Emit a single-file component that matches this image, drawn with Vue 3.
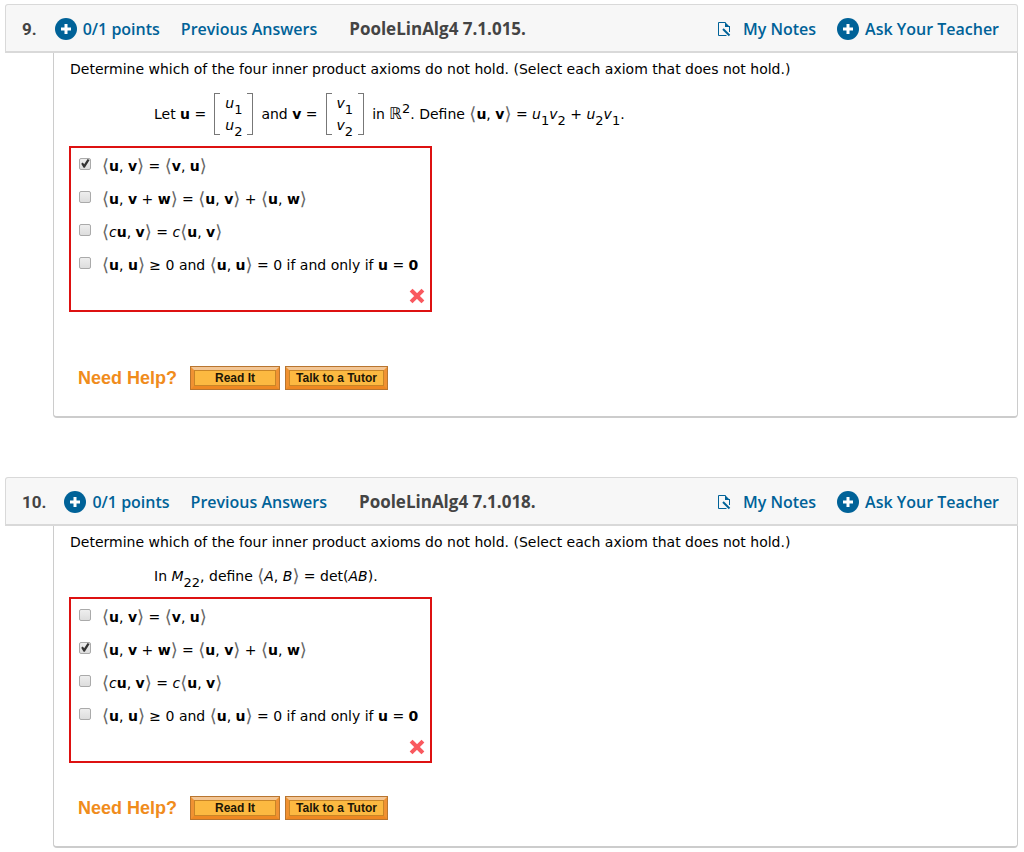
<script setup>
import { ref } from 'vue';

// each axiom is a list of parts: b = bold vector, i = italic, a = angle bracket, t = plain text
const axioms = [
    [['a', '⟨'], ['b', 'u'], ['t', ', '], ['b', 'v'], ['a', '⟩'], ['t', ' = '], ['a', '⟨'], ['b', 'v'], ['t', ', '], ['b', 'u'], ['a', '⟩']],
    [['a', '⟨'], ['b', 'u'], ['t', ', '], ['b', 'v'], ['t', ' + '], ['b', 'w'], ['a', '⟩'], ['t', ' = '], ['a', '⟨'], ['b', 'u'], ['t', ', '], ['b', 'v'], ['a', '⟩'], ['t', ' + '], ['a', '⟨'], ['b', 'u'], ['t', ', '], ['b', 'w'], ['a', '⟩']],
    [['a', '⟨'], ['i', 'c'], ['b', 'u'], ['t', ', '], ['b', 'v'], ['a', '⟩'], ['t', ' = '], ['i', 'c'], ['a', '⟨'], ['b', 'u'], ['t', ', '], ['b', 'v'], ['a', '⟩']],
    [['a', '⟨'], ['b', 'u'], ['t', ', '], ['b', 'u'], ['a', '⟩'], ['t', ' ≥ 0 and '], ['a', '⟨'], ['b', 'u'], ['t', ', '], ['b', 'u'], ['a', '⟩'], ['t', ' = 0 if and only if '], ['b', 'u'], ['t', ' = '], ['b', '0']],
];

const questions = ref([
    { number: 9, source: 'PooleLinAlg4 7.1.015.', checked: [true, false, false, false] },
    { number: 10, source: 'PooleLinAlg4 7.1.018.', checked: [false, true, false, false] },
]);
</script>

<template>
    <main class="page">
        <section class="question" v-for="question in questions" :key="question.number">
            <header class="question__header">
                <span class="question__number">{{ question.number }}.</span>
                <a class="link link--points" href="#">
                    <svg class="plus" viewBox="0 0 22 22"><circle cx="11" cy="11" r="11" /><path d="M11 6v10M6 11h10" /></svg>
                    0/1 points
                </a>
                <a class="link link--previous" href="#">Previous Answers</a>
                <h2 class="question__source">{{ question.source }}</h2>
                <a class="link link--notes" href="#">
                    <svg class="note" viewBox="0 0 14 16">
                        <path d="M12.500 11V5M8.500 1.500H1.500v13H9.500" />
                        <path class="note__fold" d="M8 1l5 5H8z" />
                        <path class="note__pen" d="M6 8l6.500 6.500" />
                    </svg>
                    My Notes
                </a>
                <a class="link" href="#">
                    <svg class="plus" viewBox="0 0 22 22"><circle cx="11" cy="11" r="11" /><path d="M11 6v10M6 11h10" /></svg>
                    Ask Your Teacher
                </a>
            </header>

            <div class="question__body">
                <p class="prompt">Determine which of the four inner product axioms do not hold. (Select each axiom that does not hold.)</p>

                <div class="given given--matrix" v-if="question.number === 9">
                    <span>Let <b>u</b> =</span>
                    <span class="matrix">
                        <span><i>u</i><sub>1</sub></span>
                        <span><i>u</i><sub>2</sub></span>
                    </span>
                    <span>and <b>v</b> =</span>
                    <span class="matrix">
                        <span><i>v</i><sub>1</sub></span>
                        <span><i>v</i><sub>2</sub></span>
                    </span>
                    <span>in <span class="reals">ℝ</span><sup>2</sup>. Define <span class="angle">⟨</span><b>u</b>, <b>v</b><span class="angle">⟩</span> = <i>u</i><sub>1</sub><i>v</i><sub>2</sub> + <i>u</i><sub>2</sub><i>v</i><sub>1</sub>.</span>
                </div>
                <div class="given" v-else>
                    <span>In <i>M</i><sub>22</sub>, define <span class="angle">⟨</span><i>A</i>, <i>B</i><span class="angle">⟩</span> = det(<i>AB</i>).</span>
                </div>

                <div class="answers">
                    <label class="answer" v-for="(axiom, index) in axioms" :key="index">
                        <input class="answer__box" type="checkbox" v-model="question.checked[index]" />
                        <span class="answer__text"><span v-for="(part, n) in axiom" :key="n" :class="'part-' + part[0]">{{ part[1] }}</span></span>
                    </label>
                    <div class="answers__mark">
                        <svg class="cross" viewBox="0 0 16 16"><path d="M3.500 3.500l9 9M12.500 3.500l-9 9" /></svg>
                    </div>
                </div>

                <div class="help" :class="{ 'help--spaced': question.number === 9 }">
                    <span class="help__title">Need Help?</span>
                    <button class="help__button help__button--read" type="button">Read It</button>
                    <button class="help__button" type="button">Talk to a Tutor</button>
                </div>
            </div>
        </section>
    </main>
</template>

<style>
    body{
        margin: 0;
        background: #fff;
    }
</style>

<style scoped>
    .page{
        display: flex;
        flex-direction: column;
        gap: 59px;
        padding: 4px 6px 4px 5px;
        font-family: Verdana, "DejaVu Sans", sans-serif;
        font-size: 14px;
        color: #000;
    }

    .question__header{
        display: flex;
        align-items: center;
        box-sizing: border-box;
        height: 49px;
        padding: 1px 18px 0 16px;
        border: 1px solid #d9d9d9;
        border-bottom-width: 2px;
        border-radius: 3px 3px 0 0;
        background: #f7f7f7;
        font-family: "Open Sans", "Noto Sans", sans-serif;
        font-size: 16px;
    }

    .question__number{
        margin-right: 18px;
        color: #444;
        font-family: Roboto, sans-serif;
        font-size: 17px;
        font-weight: 700;
    }

    .link{
        display: flex;
        align-items: center;
        gap: 6px;
        color: #006298;
        font-weight: 600;
        text-decoration: none;
        white-space: nowrap;
    }

    .link--points{
        margin-right: 21px;
    }

    .link--previous{
        margin-right: 32px;
    }

    .link--notes{
        gap: 12px;
        margin-left: auto;
        margin-right: 21px;
    }

    .plus{
        width: 22px;
        height: 22px;
        fill: #006298;
    }

    .plus path{
        stroke: #fff;
        stroke-width: 3;
    }

    .note{
        width: 14px;
        height: 16px;
        fill: none;
        stroke: #006298;
        stroke-width: 1;
    }

    .note .note__fold{
        fill: #006298;
        stroke: none;
    }

    .note .note__pen{
        stroke-width: 2;
    }

    .question__source{
        margin: 0;
        color: #444;
        font-size: 17px;
        font-weight: 700;
        white-space: nowrap;
    }

    .question__body{
        margin-left: 48px;
        padding: 6px 15px 26px;
        border: 1px solid #ccc;
        border-top: 0;
        border-bottom-width: 2px;
        border-radius: 0 0 4px 4px;
    }

    .prompt{
        margin: 0 0 14px 1px;
        line-height: 20px;
    }

    .given{
        display: flex;
        align-items: center;
        margin: 0 0 11px 85px;
        line-height: 20px;
    }

    .given--matrix{
        gap: 8px;
    }

    .matrix{
        display: flex;
        flex-direction: column;
        justify-content: space-between;
        box-sizing: border-box;
        height: 42px;
        padding: 0 10px;
        background:
            linear-gradient(#777, #777) 0 0 / 5px 1px,
            linear-gradient(#777, #777) 0 100% / 5px 1px,
            linear-gradient(#777, #777) 100% 0 / 5px 1px,
            linear-gradient(#777, #777) 100% 100% / 5px 1px;
        background-repeat: no-repeat;
        border: solid #777;
        border-width: 0 1px;
    }

    .reals{
        font-size: 16px;
        line-height: 0;
    }

    sub,
    sup{
        font-size: 13px;
        line-height: 0;
    }

    sub{
        vertical-align: -6px;
    }

    .angle,
    .part-a{
        color: #666;
        font-size: 18px;
        line-height: 0;
        vertical-align: -1px;
    }

    b,
    .part-b{
        font-weight: 700;
    }

    .part-i{
        font-style: italic;
    }

    .answers{
        display: table;
        box-sizing: border-box;
        padding: 1px 5px 0 8px;
        border: 2px solid #dd1111;
    }

    .answer{
        display: flex;
        align-items: center;
        gap: 11px;
        height: 33px;
        padding-right: 7px;
    }

    .answer__box{
        appearance: none;
        width: 12px;
        height: 12px;
        margin: 0 0 4px;
        border: 1px solid #aaa;
        border-radius: 2px;
        background: linear-gradient(#eee, #ddd);
    }

    .answer__box:checked::before{
        content: "";
        display: block;
        width: 10px;
        height: 10px;
        background: #333;
        clip-path: polygon(12% 52%, 28% 40%, 42% 58%, 76% 4%, 96% 14%, 48% 92%, 36% 92%);
    }

    .answer__text{
        white-space: pre;
    }

    .answers__mark{
        display: flex;
        align-items: center;
        justify-content: flex-end;
        height: 29px;
    }

    .cross{
        width: 16px;
        height: 16px;
        fill: none;
        stroke: #f9595f;
        stroke-width: 4;
        stroke-linecap: square;
    }

    .help{
        display: flex;
        align-items: center;
        gap: 5px;
        margin-top: 33px;
        padding-left: 9px;
    }

    .help--spaced{
        margin-top: 54px;
    }

    .help__title{
        margin-right: 8px;
        color: #f08c1c;
        font-family: "Liberation Sans", Arial, sans-serif;
        font-size: 18px;
        font-weight: 700;
    }

    .help__button{
        box-sizing: border-box;
        height: 24px;
        padding: 0 7px;
        border: 4px solid;
        border-color: #f3c695 #f09232 #ee8822 #f09232;
        outline: 1px solid #b87530;
        outline-offset: -1px;
        background: #fcb941;
        box-shadow: inset 0 0 0 1px #c98527;
        color: #1d1606;
        font-family: "Liberation Sans", Arial, sans-serif;
        font-size: 12px;
        font-weight: 700;
        line-height: 16px;
    }

    .help__button--read{
        padding: 0 21px;
    }
</style>
